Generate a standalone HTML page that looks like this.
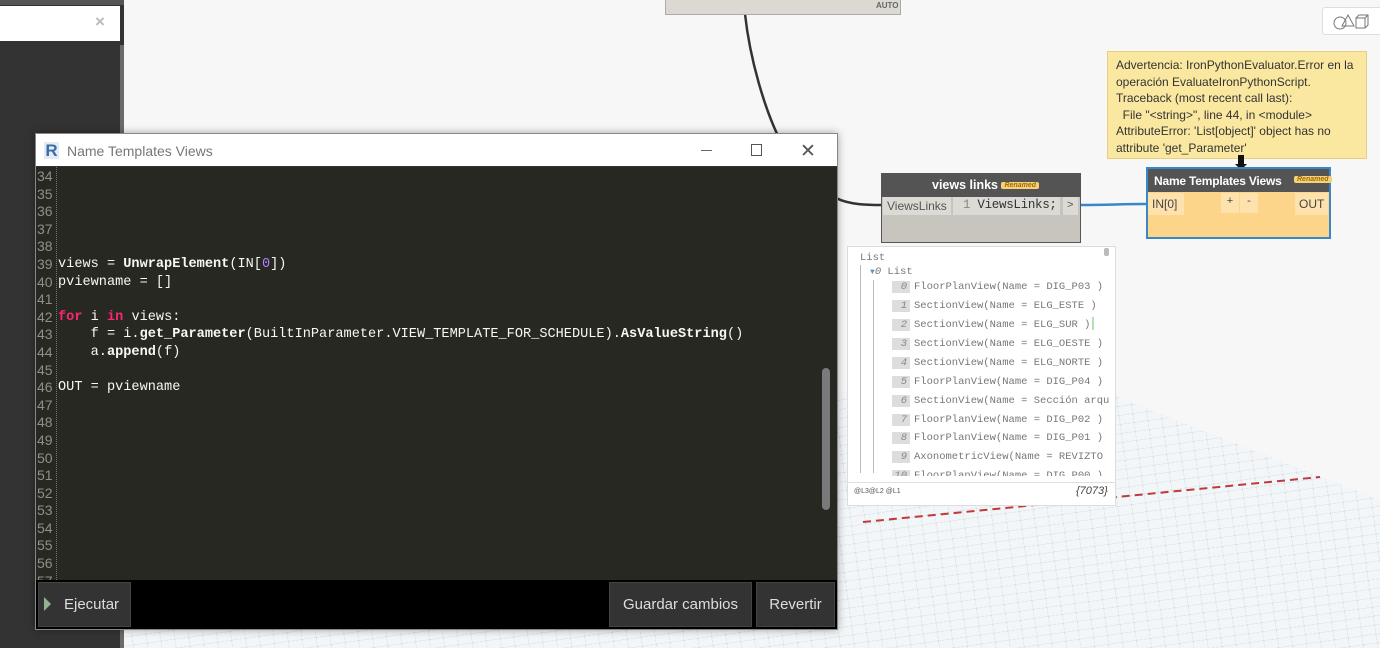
<!DOCTYPE html>
<html><head><meta charset="utf-8"><style>
*{margin:0;padding:0;box-sizing:border-box}
body{width:1380px;height:648px;overflow:hidden;background:#f7f7f7;position:relative;font-family:"Liberation Sans",sans-serif}
.abs{position:absolute;white-space:nowrap}
.code{font-family:"Liberation Mono",monospace;font-size:13.6px;line-height:17.6px;white-space:pre;color:#f8f8f2}
.ln{color:#8f908a;font-family:"Liberation Sans Narrow","Liberation Sans",sans-serif;font-size:14px;line-height:17.6px;white-space:pre}
.b{font-weight:bold}
.k{color:#f92672;font-weight:bold}
.n{color:#ae81ff}
.mono{font-family:"Liberation Mono",monospace}
.li{position:absolute;left:45px;font-family:"Liberation Mono",monospace;font-size:10.5px;color:#777;white-space:pre}
.li span{display:inline-block;background:#ddd;color:#888;width:18px;text-align:right;padding-right:3px;margin-right:4px;font-style:italic}
</style></head><body>
<svg class="abs" style="left:0;top:0" width="1380" height="648">
<defs><pattern id="g" width="14" height="9" patternUnits="userSpaceOnUse" patternTransform="rotate(-8)">
<rect width="14" height="9" fill="#f3f6f8"/><path d="M0 0H14M0 0V9" stroke="#c3ced6" stroke-width="0.7" stroke-dasharray="3 1"/></pattern></defs>
<polygon points="124,635 840,392 1100,390 1380,500 1380,648 124,648" fill="url(#g)"/>
<path d="M863 522 L1320 477" stroke="#c0393b" stroke-width="2" stroke-dasharray="8 5"/>
<path d="M745 14 C750 60 765 110 780 140" stroke="#333" stroke-width="2.5" fill="none"/>
<path d="M836 198 C850 205 868 205 882 205" stroke="#333" stroke-width="2.5" fill="none"/>
<path d="M1080 205 C1110 205 1120 204 1147 204" stroke="#3a87c8" stroke-width="2.5" fill="none"/>
</svg>
<div class="abs" style="left:0;top:0;width:124px;height:648px;background:#333"></div>
<div class="abs" style="left:0;top:0;width:124px;height:5px;background:#555"></div>
<div class="abs" style="left:0;top:6px;width:120px;height:35px;background:#fff"></div>
<div class="abs" style="left:95px;top:12px;color:#bbb;font-size:17px;font-weight:bold">×</div>
<div class="abs" style="left:120px;top:45px;width:4px;height:603px;background:#6a6a6a"></div>
<div class="abs" style="left:665px;top:-2px;width:236px;height:17px;background:#dcd9d3;border:1px solid #aaa"></div>
<div class="abs" style="left:876px;top:1px;font-size:8px;font-weight:bold;color:#666">AUTO</div>
<div class="abs" style="left:1322px;top:7px;width:60px;height:28px;background:#fff;border:1px solid #ddd;border-radius:3px"></div>
<svg class="abs" style="left:1332px;top:12px" width="40" height="18"><circle cx="8" cy="11" r="6" fill="none" stroke="#777"/><path d="M10 14L16 3L22 14Z" fill="none" stroke="#777"/><path d="M24 6h9v10h-9zM24 6l3-3h9v10l-3 3M33 6l3-3" fill="none" stroke="#777"/></svg>
<div class="abs" style="left:881px;top:173px;width:200px;height:70px;background:#c8c5bf;border:1px solid #555"></div>
<div class="abs" style="left:881px;top:173px;width:200px;height:24px;background:#545454;color:#fff;font-size:12.5px;font-weight:bold;padding:5px 0 0 51px">views links <span style="background:#f5d27a;color:#a06b00;font-size:7px;font-style:italic;padding:0 3px;border-radius:2px;vertical-align:2px">Renamed</span></div>
<div class="abs" style="left:883px;top:197px;width:68px;height:18px;background:#dcdad5;color:#555;font-size:12px;padding:2px 4px">ViewsLinks</div>
<div class="abs mono" style="left:953px;top:197px;width:107px;height:18px;background:#dcdad5;color:#333;font-size:12.5px;padding:1px 10px;letter-spacing:-0.3px"><span style="color:#888">1</span> ViewsLinks;</div>
<div class="abs" style="left:1063px;top:197px;width:15px;height:18px;background:#dcdad5;color:#555;font-size:11px;padding:2px 4px">&gt;</div>
<div class="abs" style="left:1107px;top:51px;width:260px;height:108px;background:#fbe8a0;border:1px solid #e6cf80;font-size:12px;line-height:16.6px;color:#333;padding:5px 0 0 8px;white-space:pre">Advertencia: IronPythonEvaluator.Error en la
operación EvaluateIronPythonScript.
Traceback (most recent call last):
  File "&lt;string&gt;", line 44, in &lt;module&gt;
AttributeError: 'List[object]' object has no
attribute 'get_Parameter'</div>
<div class="abs" style="left:1238px;top:155px;width:6px;height:10px;background:#111"></div>
<div class="abs" style="left:1235px;top:164px;border:6px solid transparent;border-top:6px solid #111"></div>
<div class="abs" style="left:1146px;top:167px;width:185px;height:72px;background:#fcd48a;border:2px solid #3a87c8"></div>
<div class="abs" style="left:1148px;top:169px;width:181px;height:23px;background:#545454;color:#fff;font-size:12px;font-weight:bold;padding:5px 0 0 6px;letter-spacing:-0.2px">Name Templates Views<span style="position:absolute;left:146px;top:7px;background:#f5d27a;color:#a06b00;font-size:7px;font-style:italic;padding:0 3px;border-radius:2px;letter-spacing:0">Renamed</span></div>
<div class="abs" style="left:1148px;top:193px;width:36px;height:22px;background:#fde2ae;color:#444;font-size:12px;padding:4px 4px">IN[0]</div>
<div class="abs" style="left:1221px;top:193px;width:18px;height:20px;background:#fde2ae;color:#444;font-size:11px;text-align:center;padding-top:2px">+</div>
<div class="abs" style="left:1240px;top:193px;width:18px;height:20px;background:#fde2ae;color:#444;font-size:11px;text-align:center;padding-top:2px">-</div>
<div class="abs" style="left:1295px;top:193px;width:33px;height:22px;background:#fde2ae;color:#444;font-size:12px;padding:4px 4px">OUT</div>
<div class="abs" style="left:847px;top:246px;width:269px;height:260px;background:#fff;border:1px solid #ddd"></div>
<div class="abs" style="left:847px;top:482px;width:269px;height:1px;background:#e0e0e0"></div>
<div class="abs" style="left:1104px;top:248px;width:5px;height:8px;background:#bbb;border-radius:2px"></div>
<div class="abs" style="left:860px;top:265px;width:1px;height:208px;background:#bbb"></div>
<div class="abs" style="left:873px;top:280px;width:1px;height:193px;background:#bbb"></div>
<div class="abs" style="left:860px;top:252px;font-family:'Liberation Mono',monospace;font-size:10.5px;color:#777">List</div>
<div class="abs" style="left:870px;top:266px;font-family:'Liberation Mono',monospace;font-size:10.5px;color:#777"><span style="color:#6b8fc7;font-size:8px">▼</span><i>0</i> List</div>
<div style="position:absolute;left:847px;top:280px;width:262px;height:196px;overflow:hidden">
<div class="li" style="top:1px"><span>0</span>FloorPlanView(Name = DIG_P03 )</div>
<div class="li" style="top:20px"><span>1</span>SectionView(Name = ELG_ESTE )</div>
<div class="li" style="top:39px"><span>2</span>SectionView(Name = ELG_SUR )</div>
<div class="li" style="top:58px"><span>3</span>SectionView(Name = ELG_OESTE )</div>
<div class="li" style="top:77px"><span>4</span>SectionView(Name = ELG_NORTE )</div>
<div class="li" style="top:96px"><span>5</span>FloorPlanView(Name = DIG_P04 )</div>
<div class="li" style="top:115px"><span>6</span>SectionView(Name = Sección arqu</div>
<div class="li" style="top:134px"><span>7</span>FloorPlanView(Name = DIG_P02 )</div>
<div class="li" style="top:152px"><span>8</span>FloorPlanView(Name = DIG_P01 )</div>
<div class="li" style="top:171px"><span>9</span>AxonometricView(Name = REVIZTO</div>
<div class="li" style="top:190px"><span>10</span>FloorPlanView(Name = DIG_P00 )</div>
</div>
<div class="abs" style="left:1092px;top:317px;width:2px;height:13px;background:#b5e0b5"></div>
<div class="abs" style="left:854px;top:488px;font-size:7px;color:#555">@L3@L2 @L1</div>
<div class="abs" style="left:1076px;top:485px;font-size:11px;color:#444;font-style:italic">{7073}</div>
<div class="abs" style="left:35px;top:133px;width:803px;height:497px;background:#272822;border:1px solid #888;box-shadow:0 0 8px rgba(0,0,0,.35)"></div>
<div class="abs" style="left:36px;top:134px;width:801px;height:33px;background:#fff;border-bottom:1px solid #333"></div>
<div class="abs" style="left:44px;top:142px;width:15px;height:17px;color:#3b6ea8;font-weight:bold;font-size:17px;background:#e3ebf5;line-height:17px;text-align:center">R</div>
<div class="abs" style="left:67px;top:143px;font-size:14px;color:#777">Name Templates Views</div>
<div class="abs" style="left:701px;top:150px;width:11px;height:1px;background:#666"></div>
<div class="abs" style="left:751px;top:144px;width:11px;height:12px;border:1px solid #555"></div>
<div class="abs" style="left:800px;top:140px;font-size:19px;color:#555">✕</div>
<div class="abs" style="left:56px;top:167px;width:0;height:413px;border-left:1px dotted #777"></div>
<div class="abs" style="left:37px;top:168px;height:412px;overflow:hidden"><div class="ln">34
35
36
37
38
39
40
41
42
43
44
45
46
47
48
49
50
51
52
53
54
55
56
57</div></div>
<div class="abs code" style="left:58px;top:168px">




views = <span class="b">UnwrapElement</span>(IN[<span class="n">0</span>])
pviewname = []

<span class="k">for</span> i <span class="k">in</span> views:
    f = i.<span class="b">get_Parameter</span>(BuiltInParameter.VIEW_TEMPLATE_FOR_SCHEDULE).<span class="b">AsValueString</span>()
    a.<span class="b">append</span>(f)

OUT = pviewname</div>
<div class="abs" style="left:822px;top:368px;width:8px;height:142px;background:#7a7a7a;border-radius:4px"></div>
<div class="abs" style="left:36px;top:580px;width:801px;height:49px;background:#000"></div>
<div class="abs" style="left:38px;top:582px;width:93px;height:45px;background:#333;border:1px solid #444"></div>
<div class="abs" style="left:44px;top:597px;width:0;height:0;border-top:7px solid transparent;border-bottom:7px solid transparent;border-left:7px solid #8fb38f"></div>
<div class="abs" style="left:64px;top:596px;font-size:15px;color:#ddd">Ejecutar</div>
<div class="abs" style="left:609px;top:582px;width:143px;height:45px;background:#333;border:1px solid #444;color:#ddd;font-size:15px;text-align:center;padding-top:13px">Guardar cambios</div>
<div class="abs" style="left:756px;top:582px;width:79px;height:45px;background:#333;border:1px solid #444;color:#ddd;font-size:15px;text-align:center;padding-top:13px">Revertir</div>
</body></html>
